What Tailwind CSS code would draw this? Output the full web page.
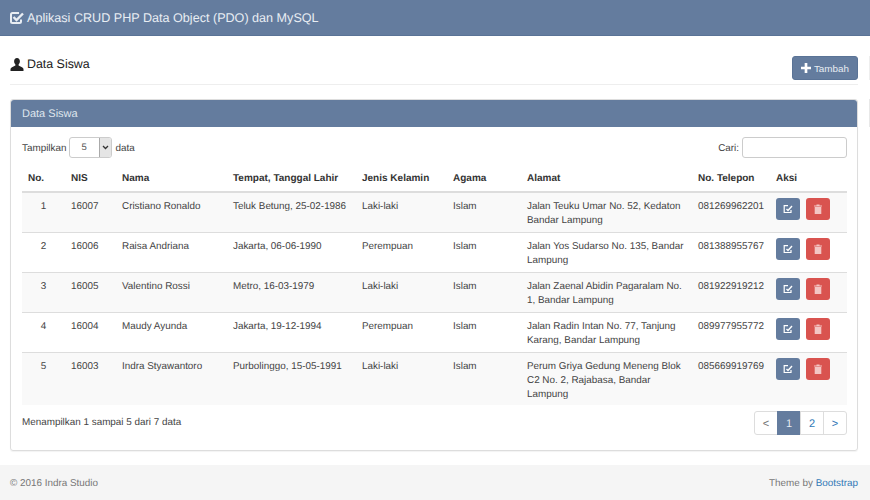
<!DOCTYPE html>
<html lang="id">
<head>
  <meta charset="UTF-8" />
  <title>Aplikasi CRUD PHP Data Object (PDO) dan MySQL</title>
  <script src="https://cdn.jsdelivr.net/npm/@tailwindcss/browser@4"></script>
</head>
<body class="relative h-[500px] w-[870px] overflow-hidden bg-white font-['Liberation_Sans',Arial,sans-serif] text-[9.9px] leading-[14px] text-[#444] [text-rendering:geometricPrecision]">
  <header class="flex h-9 items-center gap-[3px] border-b border-[#5a7396] bg-[#647c9e] pl-[10px] text-[12.6px] text-[#e8edf3]">
    <svg class="h-[14px] w-[14px]" viewBox="0 0 14 14" fill="none"><path d="M11 8.500v2A1.500 1.500 0 0 1 9.500 12h-7A1.500 1.500 0 0 1 1 10.500v-7A1.500 1.500 0 0 1 2.500 2H9" stroke="#e8edf3" stroke-width="2"/><path d="M3.500 6l3 3L13 2.500" stroke="#e8edf3" stroke-width="2.400"/></svg>
    <span>Aplikasi CRUD PHP Data Object (PDO) dan MySQL</span>
  </header>

  <main class="pl-[10px] pr-[12px]">
    <div class="flex h-[49px] items-start justify-between border-b border-[#eee]">
      <h1 class="mt-[20px] flex items-center gap-[3px] text-[12.4px] leading-4 text-[#222]">
        <svg class="h-[13px] w-[14px]" viewBox="0 0 13 13" fill="#222"><path d="M6.500 0C4.700 0 3.600 1.400 3.600 3.300c0 1.300.5 2.500 1.300 3.200v1L1.500 9.200C.5 9.700 0 10.300 0 11.500V13h13v-1.500c0-1.200-.5-1.800-1.500-2.300L8.100 7.500v-1c.8-.7 1.300-1.900 1.300-3.200C9.400 1.400 8.300 0 6.500 0z"/></svg>
        Data Siswa
      </h1>
      <button class="mt-[20px] flex h-6 w-[66px] items-center justify-center gap-[3px] rounded-[3px] border border-[#5a7396] bg-[#647c9e] text-[9.9px] text-[#e8edf3]">
        <svg class="h-[10px] w-[10px]" viewBox="0 0 9 9" fill="#fff"><path d="M3.300 0h2.400v3.300H9v2.400H5.700V9H3.300V5.700H0V3.300h3.300z"/></svg>
        <span class="pt-[2px]">Tambah</span>
      </button>
    </div>

    <section class="mt-[14px] h-[352px] rounded-[3px] border border-[#ddd] shadow-[0_1px_1px_rgba(0,0,0,0.05)]">
      <h2 class="flex h-[27px] items-center rounded-t-[3px] bg-[#647c9e] px-[11px] text-[11px] text-[#dfe5ed]">Data Siswa</h2>
      <div class="pl-[11px] pr-[10px]">
        <div class="flex h-[41px] items-center justify-between">
          <div class="flex items-center gap-[2px]">
            <span class="pt-[2px]">Tampilkan</span>
            <span class="mx-px flex h-[21px] w-[43px] items-center justify-between overflow-hidden rounded-[3px] border border-[#ccc] pl-[11px] text-[9.5px] text-[#555]">
              5
              <span class="flex h-full w-[12px] items-center justify-center border-l border-[#aaa] bg-[#e5e5e5]">
                <svg class="h-[5px] w-[7px]" viewBox="0 0 7 5" fill="none"><path d="M1 1l2.500 2.500L6 1" stroke="#333" stroke-width="1.300"/></svg>
              </span>
            </span>
            <span class="pt-[2px]">data</span>
          </div>
          <label class="flex items-center gap-[3px]">
            <span class="pt-[2px]">Cari:</span>
            <span class="h-[21px] w-[105px] rounded-[3px] border border-[#ccc] bg-white"></span>
          </label>
        </div>

        <table class="w-[825px] table-fixed border-collapse">
          <colgroup>
            <col class="w-[43px]" /><col class="w-[51px]" /><col class="w-[111px]" /><col class="w-[129px]" /><col class="w-[91px]" /><col class="w-[74px]" /><col class="w-[171px]" /><col class="w-[78px]" /><col />
          </colgroup>
          <thead>
            <tr class="h-[24px] border-b-2 border-[#ddd] text-left align-top text-[10px] font-bold text-[#333]">
              <th class="pl-[6px] pt-[4px]">No.</th><th class="pl-[6px] pt-[4px]">NIS</th><th class="pl-[6px] pt-[4px]">Nama</th><th class="pl-[6px] pt-[4px]">Tempat, Tanggal Lahir</th><th class="pl-[6px] pt-[4px]">Jenis Kelamin</th><th class="pl-[6px] pt-[4px]">Agama</th><th class="pl-[6px] pt-[4px]">Alamat</th><th class="pl-[6px] pt-[4px]">No. Telepon</th><th class="pl-[6px] pt-[4px]">Aksi</th>
            </tr>
          </thead>
          <tbody id="rows" class="align-top"></tbody>
        </table>

        <div class="mt-[6px] flex items-start justify-between">
          <span class="mt-[5px]">Menampilkan 1 sampai 5 dari 7 data</span>
          <nav class="flex h-6 text-[11px]">
            <a class="flex w-6 items-center justify-center rounded-l-[3px] border border-[#ddd] pt-[1px] text-[#777]">&lt;</a>
            <a class="-ml-px flex w-6 items-center justify-center border border-[#647c9e] bg-[#647c9e] pt-[1px] text-[#e8edf3]">1</a>
            <a class="-ml-px flex w-6 items-center justify-center border border-[#ddd] pt-[1px] text-[#337ab7]">2</a>
            <a class="-ml-px flex w-6 items-center justify-center rounded-r-[3px] border border-[#ddd] pt-[1px] text-[#337ab7]">&gt;</a>
          </nav>
        </div>
      </div>
    </section>
  </main>

  <!-- potongan kolom kedua di tepi kanan -->
  <div class="absolute left-[869px] top-[56px] h-6 w-px bg-[#eee]"></div>
  <div class="absolute left-[869px] top-[99px] h-[28px] w-px bg-[#e8e8e8]"></div>

  <footer class="absolute bottom-0 left-0 flex h-[35px] w-full items-center justify-between bg-[#f5f5f5] pl-[10px] pr-[12px] pt-[2px] text-[#777]">
    <span>© 2016 Indra Studio</span>
    <span>Theme by <a class="text-[#337ab7]">Bootstrap</a></span>
  </footer>

  <script>
    const siswa = [
      ["1", "16007", "Cristiano Ronaldo", "Teluk Betung, 25-02-1986", "Laki-laki", "Jalan Teuku Umar No. 52, Kedaton Bandar Lampung", "081269962201"],
      ["2", "16006", "Raisa Andriana", "Jakarta, 06-06-1990", "Perempuan", "Jalan Yos Sudarso No. 135, Bandar Lampung", "081388955767"],
      ["3", "16005", "Valentino Rossi", "Metro, 16-03-1979", "Laki-laki", "Jalan Zaenal Abidin Pagaralam No. 1, Bandar Lampung", "081922919212"],
      ["4", "16004", "Maudy Ayunda", "Jakarta, 19-12-1994", "Perempuan", "Jalan Radin Intan No. 77, Tanjung Karang, Bandar Lampung", "089977955772"],
      ["5", "16003", "Indra Styawantoro", "Purbolinggo, 15-05-1991", "Laki-laki", "Perum Griya Gedung Meneng Blok C2 No. 2, Rajabasa, Bandar Lampung", "085669919769"],
    ];

    document.getElementById("rows").innerHTML = siswa.map((s, i) => `
      <tr class="${i === 4 ? "h-[53px]" : "h-[40px] border-b border-[#ddd]"} ${i % 2 === 0 ? "bg-[#f9f9f9]" : ""}">
        <td class="pt-[7px] text-center">${s[0]}</td>
        <td class="pl-[6px] pt-[7px]">${s[1]}</td>
        <td class="pl-[6px] pt-[7px]">${s[2]}</td>
        <td class="pl-[6px] pt-[7px]">${s[3]}</td>
        <td class="pl-[6px] pt-[7px]">${s[4]}</td>
        <td class="pl-[6px] pt-[7px]">Islam</td>
        <td class="pl-[6px] pr-[6px] pt-[7px]">${s[5]}</td>
        <td class="pl-[6px] pt-[7px]">${s[6]}</td>
        <td class="pl-[6px] pt-[5px]">
          <div class="flex gap-[6px]">
            <button class="flex h-[22px] w-6 items-center justify-center rounded-[3px] bg-[#647c9e]"><svg class="h-[10px] w-[10px]" viewBox="0 0 10 10" fill="none"><path d="M8 6v2.500H1.200V1.700H5" stroke="#fff" stroke-width="1.200"/><path d="M3.500 5l1.500 1.500 4-4.500" stroke="#fff" stroke-width="1.400"/></svg></button>
            <button class="flex h-[22px] w-6 items-center justify-center rounded-[3px] bg-[#d9534f]"><svg class="h-[10px] w-[10px]" viewBox="0 0 10 10" fill="#f3c6c4"><path d="M1 1.500h2.500V.5h3v1H9v1H1zM1.700 3h6.600v7H1.700z"/></svg></button>
          </div>
        </td>
      </tr>`).join("");
  </script>
</body>
</html>
